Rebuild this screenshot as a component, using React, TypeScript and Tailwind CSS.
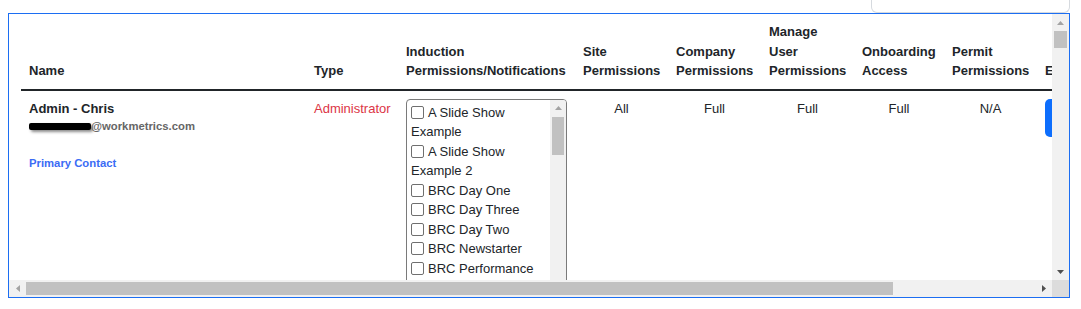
import React from 'react';

const inductions = [
    'A Slide Show Example',
    'A Slide Show Example 2',
    'BRC Day One',
    'BRC Day Three',
    'BRC Day Two',
    'BRC Newstarter',
    'BRC Performance',
    'BRC Safety Walk',
    'Contractor Induction',
];

function Arrow({ dir, dark }: { dir: 'up' | 'down' | 'left' | 'right'; dark?: boolean }) {
    const fill = dark ? '#505050' : '#a3a3a3';
    const pts = {
        up: '0,4 7,4 3.5,0',
        down: '0,0 7,0 3.5,4',
        left: '4,0 4,7 0,3.5',
        right: '0,0 0,7 4,3.5',
    }[dir];
    const vertical = dir === 'up' || dir === 'down';
    return (
        <svg width={vertical ? 7 : 4} height={vertical ? 4 : 7} viewBox={vertical ? '0 0 7 4' : '0 0 4 7'}>
            <polygon points={pts} fill={fill} />
        </svg>
    );
}

function Checkbox() {
    return (
        <span className="inline-block w-[13px] h-[13px] border border-[#6f6f6f] rounded-[2px] bg-white align-[-2px] mr-[4px]" />
    );
}

function InductionList() {
    return (
        <div className="flex w-[161px] h-[240px] border border-[#7a7a7a] rounded-[4px] overflow-hidden bg-white">
            {/* list of inductions */}
            <div className="flex-1 overflow-hidden pt-[3px] pl-[4px] pr-[2px] text-left">
                {inductions.map((name) => (
                    <div key={name} className="leading-[19.5px]">
                        <Checkbox />
                        {name}
                    </div>
                ))}
            </div>
            <div className="w-[16px] bg-[#f1f1f1] flex flex-col items-center">
                <div className="h-[17px] flex items-center justify-center">
                    <Arrow dir="up" />
                </div>
                <div className="w-[12px] h-[38px] bg-[#c1c1c1]" />
            </div>
        </div>
    );
}

export default function App() {
    const th = 'px-[8px] pt-[8px] pb-[8px] align-bottom text-left font-bold border-b-2 border-[#212529]';
    const td = 'px-[8px] py-[8px] align-top';

    return (
        <div className="w-[1081px] h-[309px] bg-white font-['Liberation_Sans',Arial,sans-serif] text-[13px] text-[#212529]">
            {/* search box peeking above */}
            <div className="flex justify-end pr-[11px]">
                <div className="w-[199px] h-[13px] border border-t-0 border-[#d6dadf] rounded-b-[6px]" />
            </div>

            <div className="ml-[8px] w-[1062px] h-[285px] border border-[#1c6ef2] flex flex-col">
                <div className="flex flex-1 min-h-0">
                    <div className="flex-1 overflow-hidden pl-[12px]">
                        <table className="table-fixed border-separate border-spacing-0 w-[1240px]">
                            <colgroup>
                                <col className="w-[285px]" />
                                <col className="w-[92px]" />
                                <col className="w-[177px]" />
                                <col className="w-[93px]" />
                                <col className="w-[93px]" />
                                <col className="w-[93px]" />
                                <col className="w-[90px]" />
                                <col className="w-[93px]" />
                                <col className="w-[224px]" />
                            </colgroup>
                            <thead className="leading-[19.5px]">
                                <tr>
                                    <th className={th}>Name</th>
                                    <th className={th}>Type</th>
                                    <th className={th}>Induction<br />Permissions/Notifications</th>
                                    <th className={th}>Site<br />Permissions</th>
                                    <th className={th}>Company<br />Permissions</th>
                                    <th className={th}>Manage<br />User<br />Permissions</th>
                                    <th className={th}>Onboarding<br />Access</th>
                                    <th className={th}>Permit<br />Permissions</th>
                                    <th className={th}>Edit</th>
                                </tr>
                            </thead>
                            <tbody className="leading-[19.5px]">
                                <tr>
                                    <td className={td}>
                                        <div className="font-bold">Admin - Chris</div>
                                        <div className="text-[11.3px] leading-[16px] font-bold text-[#666]">
                                            <span className="inline-block w-[62px] h-[7px] bg-black rounded-[2px] shadow-[2px_2px_3px_rgba(0,0,0,0.45)] align-[0px]" />
                                            @workmetrics.com
                                        </div>
                                        <div className="mt-[22px] text-[11.3px] leading-[14px] font-bold text-[#3b6cf5]">
                                            Primary Contact
                                        </div>
                                    </td>
                                    <td className={`${td} text-[#dc3545]`}>Administrator</td>
                                    <td className={td}>
                                        <InductionList />
                                    </td>
                                    <td className={`${td} text-center`}>All</td>
                                    <td className={`${td} text-center`}>Full</td>
                                    <td className={`${td} text-center`}>Full</td>
                                    <td className={`${td} text-center`}>Full</td>
                                    <td className={`${td} text-center`}>N/A</td>
                                    <td className={td}>
                                        <button className="h-[38px] px-[12px] rounded-[5px] bg-[#0d6efd] text-white">Edit</button>
                                    </td>
                                </tr>
                            </tbody>
                        </table>
                    </div>

                    {/* vertical scrollbar */}
                    <div className="w-[17px] bg-[#f1f1f1] flex flex-col items-center">
                        <div className="h-[17px] flex items-center justify-center">
                            <Arrow dir="up" />
                        </div>
                        <div className="w-[13px] h-[17px] bg-[#c1c1c1]" />
                        <div className="flex-1" />
                        <div className="h-[17px] flex items-center justify-center">
                            <Arrow dir="down" dark />
                        </div>
                    </div>
                </div>

                {/* horizontal scrollbar */}
                <div className="h-[17px] flex">
                    <div className="flex-1 bg-[#f1f1f1] flex items-center">
                        <div className="w-[17px] h-[17px] flex items-center justify-center">
                            <Arrow dir="left" />
                        </div>
                        <div className="w-[867px] h-[13px] bg-[#c1c1c1]" />
                        <div className="flex-1" />
                        <div className="w-[17px] h-[17px] flex items-center justify-center">
                            <Arrow dir="right" dark />
                        </div>
                    </div>
                    <div className="w-[17px] bg-[#dcdcdc]" />
                </div>
            </div>
        </div>
    );
}
